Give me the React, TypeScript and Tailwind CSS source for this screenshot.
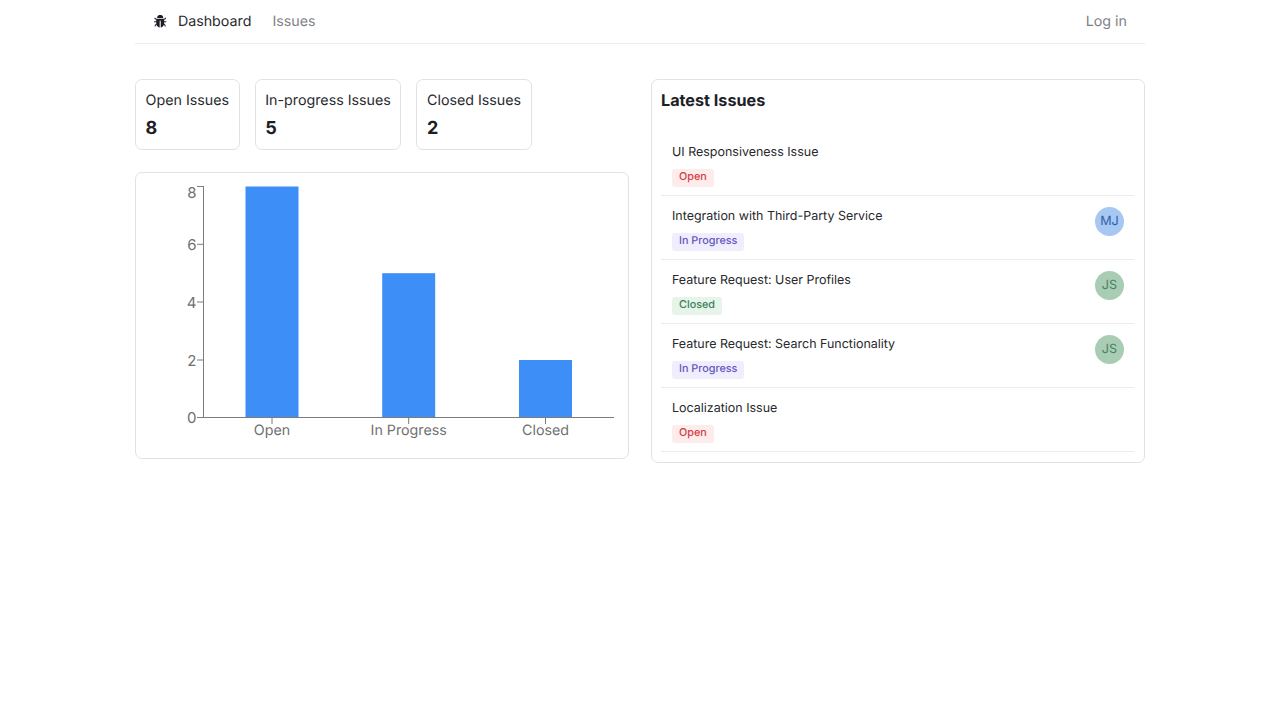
import { AiFillBug } from 'react-icons/ai';

const stats = [
  { label: 'Open Issues', value: 8 },
  { label: 'In-progress Issues', value: 5 },
  { label: 'Closed Issues', value: 2 },
];

type Status = 'Open' | 'In Progress' | 'Closed';

const issues: { title: string; status: Status; avatar?: string }[] = [
  { title: 'UI Responsiveness Issue', status: 'Open' },
  { title: 'Integration with Third-Party Service', status: 'In Progress', avatar: 'MJ' },
  { title: 'Feature Request: User Profiles', status: 'Closed', avatar: 'JS' },
  { title: 'Feature Request: Search Functionality', status: 'In Progress', avatar: 'JS' },
  { title: 'Localization Issue', status: 'Open' },
];

const badgeClass: Record<Status, string> = {
  Open: 'bg-[#feebec] text-[#cf3f44]',
  'In Progress': 'bg-[#f0eefc] text-[#6256c2]',
  Closed: 'bg-[#e6f4ea] text-[#3a8059]',
};

const avatarClass: Record<string, string> = {
  MJ: 'bg-[#a6c8f2] text-[#2f5fa8]',
  JS: 'bg-[#a9cdb4] text-[#4a8162]',
};

function Chart() {
  const axis = '#7c7c7c';
  const bars = [
    { label: 'Open', x: 245.5, top: 186.5 },
    { label: 'In Progress', x: 382.2, top: 273.2 },
    { label: 'Closed', x: 519, top: 360 },
  ];
  const ticks = [
    { label: '8', y: 186.5, ty: 198 },
    { label: '6', y: 244.3, ty: 250 },
    { label: '4', y: 302, ty: 307.5 },
    { label: '2', y: 360, ty: 365.5 },
    { label: '0', y: 417.5, ty: 423 },
  ];
  return (
    <svg width="492" height="285" viewBox="136 173 492 285" className="block">
      <line x1="203.5" y1="186" x2="203.5" y2="418" stroke={axis} />
      <line x1="203" y1="417.5" x2="614" y2="417.5" stroke={axis} />
      {ticks.map((t) => (
        <g key={t.label}>
          <line x1="197" y1={t.y} x2="203" y2={t.y} stroke={axis} />
          <text x="196.5" y={t.ty} textAnchor="end" fontSize="15" fill="#707070">
            {t.label}
          </text>
        </g>
      ))}
      {bars.map((b) => (
        <g key={b.label}>
          <rect x={b.x} y={b.top} width="53" height={417 - b.top} fill="#3e8ef7" />
          <line x1={b.x + 26.5} y1="418" x2={b.x + 26.5} y2="424" stroke={axis} />
          <text x={b.x + 26.5} y="435" textAnchor="middle" fontSize="14.25" fill="#707070">
            {b.label}
          </text>
        </g>
      ))}
    </svg>
  );
}

export default function App() {
  return (
    <div className="min-h-[720px] bg-white text-[#1c2024] antialiased font-['Inter',sans-serif] [text-rendering:geometricPrecision]">
      <div className="mx-auto w-[1010px]">
        <nav className="flex h-[44px] items-center justify-between border-b border-[#ececec] pl-[18px] pr-[18px]">
          <div className="flex items-center">
            <AiFillBug className="text-[14.4px] text-[#1c2024]" />
            <a className="ml-[10.5px] pt-[2px] text-[14.25px] leading-none text-[#27292d]">Dashboard</a>
            <a className="ml-[21px] pt-[2px] text-[14.25px] leading-none text-[#7f8186]">Issues</a>
          </div>
          <a className="pt-[2px] text-[14.25px] leading-none text-[#7f8186]">Log in</a>
        </nav>

        <main className="grid grid-cols-2 gap-[22px] pt-[35px]">
          <div className="flex flex-col gap-[22px]">
            <div className="flex gap-[15px]">
              {stats.map((s) => (
                <div
                  key={s.label}
                  className="flex h-[71px] flex-col gap-[6.5px] rounded-[7px] border border-[#e2e2e4] px-[9.6px] pt-[12px]"
                >
                  <div className="text-[14.25px] leading-[18px] text-[#27292d]">{s.label}</div>
                  <div className="text-[18px] leading-[23px] font-bold">{s.value}</div>
                </div>
              ))}
            </div>
            <div className="h-[287px] rounded-[7px] border border-[#e2e2e4]">
              <Chart />
            </div>
          </div>

          <div className="h-[384px] rounded-[7px] border border-[#e2e2e4] pl-[9px] pr-[10px] pt-[9px]">
            <h2 className="pb-[21px] text-[16.2px] leading-[22px] font-bold">Latest Issues</h2>
            <div>
              {issues.map((issue) => (
                <div
                  key={issue.title + issue.status}
                  className="flex h-[64px] items-start justify-between border-b border-[#ececec] pr-[10px] pl-[11px] pt-[12px]"
                >
                  <div className="flex flex-col items-start gap-[6.5px]">
                    <div className="text-[12.48px] leading-[18px] text-[#27292d]">{issue.title}</div>
                    <span
                      className={`flex h-[18px] items-center rounded-[3px] px-[7px] text-[10.8px] font-medium ${badgeClass[issue.status]}`}
                    >
                      {issue.status}
                    </span>
                  </div>
                  {issue.avatar && (
                    <div
                      className={`-mt-[1px] flex h-[29px] w-[29px] items-center justify-center rounded-full pt-[1px] text-[12.6px] ${avatarClass[issue.avatar]}`}
                    >
                      {issue.avatar}
                    </div>
                  )}
                </div>
              ))}
            </div>
          </div>
        </main>
      </div>
    </div>
  );
}
